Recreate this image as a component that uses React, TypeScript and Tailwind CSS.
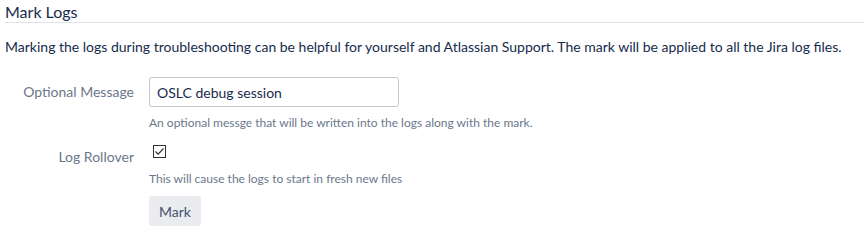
export default function App() {
  return (
    <div className="w-[864px] h-[245px] bg-white text-[#172b4d] font-['Lato',sans-serif]">
      <div className="pl-[5px]">
        <h2 className="text-[16px] leading-[20px] pt-[2px] pb-[0px] border-b border-[#dfe1e6]">Mark Logs</h2>
      </div>
      <p className="pl-[5px] pt-[14px] text-[14px] leading-[20px] whitespace-nowrap">
        Marking the logs during troubleshooting can be helpful for yourself and Atlassian Support. The mark will be applied to all the Jira log files.
      </p>
      <div className="mt-[20px] grid grid-cols-[134px_1fr] gap-x-[15px]">
        <label className="text-right text-[14px] text-[#6b778c] leading-[20px] pt-[5px]">Optional Message</label>
        <div>
          <input
            defaultValue="OSLC debug session"
            className="w-[250px] h-[30px] px-[7px] border border-[#c1c7d0] rounded-[3px] text-[14px] text-[#172b4d] outline-none"
          />
          <div className="text-[12px] text-[#6b778c] leading-[16px] mt-[8px]">
            An optional messge that will be written into the logs along with the mark.
          </div>
        </div>
        <label className="text-right text-[14px] text-[#6b778c] leading-[20px] mt-[16px]">Log Rollover</label>
        <div className="mt-[14px]">
          <div className="ml-[4px] w-[13px] h-[13px] border border-[#333] flex items-center justify-center">
            <svg width="11" height="11" viewBox="0 0 11 11">
              <path d="M1.5 5.5 L4.2 8.2 L9.5 2.5" fill="none" stroke="#333" strokeWidth="1.2" />
            </svg>
          </div>
          <div className="text-[12px] text-[#6b778c] leading-[16px] mt-[13px]">
            This will cause the logs to start in fresh new files
          </div>
          <button className="mt-[9px] h-[30px] px-[10px] rounded-[3px] bg-[#ebecf0] text-[14px] text-[#42526e]">
            Mark
          </button>
        </div>
      </div>
    </div>
  );
}
